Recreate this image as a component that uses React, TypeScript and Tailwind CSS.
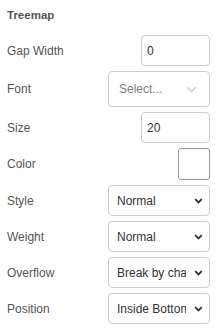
import React from "react";

const LABEL = "text-[12px] text-[#555]";

function TextBox({ value }: { value: string }) {
  return (
    <div className="flex h-[31px] w-[69px] items-center rounded-[4px] border border-[#ccc] bg-white pl-[5px] text-[12px] text-[#333]">
      {value}
    </div>
  );
}

function NativeSelect({ value }: { value: string }) {
  return (
    <div className="flex h-[31px] w-[102px] items-center rounded-[4px] border border-[#ccc] bg-white pl-[8px] pr-[6px] text-[12px] text-[#333]">
      <span className="block w-[69px] overflow-hidden whitespace-nowrap">{value}</span>
      <svg width="9" height="6" viewBox="0 0 9 6" className="ml-auto">
        <path d="M1.2 1.2 L4.5 4.5 L7.8 1.2" fill="none" stroke="#333" strokeWidth="1.8" />
      </svg>
    </div>
  );
}

function FontSelect() {
  return (
    <div className="flex h-[36px] w-[102px] items-center rounded-[4px] border border-[#ccc] bg-white pl-[10px] pr-[12px] text-[12px] text-[#808080]">
      <span>Select...</span>
      <svg width="11" height="7" viewBox="0 0 11 7" className="ml-auto">
        <path d="M1 1 L5.5 5.5 L10 1" fill="none" stroke="#ccc" strokeWidth="1.5" />
      </svg>
    </div>
  );
}

function Row({ label, children }: { label: string; children: React.ReactNode }) {
  return (
    <div className="flex items-center justify-between">
      <span className={LABEL}>{label}</span>
      {children}
    </div>
  );
}

export default function App() {
  return (
    <div className="w-[224px] bg-white pl-[7px] pr-[14px] pt-[8px] font-['Liberation_Sans',Arial,sans-serif]">
      <div className="h-[14px] text-[11.5px] font-bold leading-[14px] text-[#555]">Treemap</div>
      <div className="mt-[13px] flex flex-col gap-[5px]">
        <Row label="Gap Width">
          <TextBox value="0" />
        </Row>
        <Row label="Font">
          <FontSelect />
        </Row>
        <Row label="Size">
          <TextBox value="20" />
        </Row>
        <Row label="Color">
          <div className="h-[32px] w-[32px] rounded-[3px] border border-[#999] bg-white" />
        </Row>
        <Row label="Style">
          <NativeSelect value="Normal" />
        </Row>
        <Row label="Weight">
          <NativeSelect value="Normal" />
        </Row>
        <Row label="Overflow">
          <NativeSelect value="Break by character" />
        </Row>
        <Row label="Position">
          <NativeSelect value="Inside Bottom" />
        </Row>
      </div>
    </div>
  );
}
